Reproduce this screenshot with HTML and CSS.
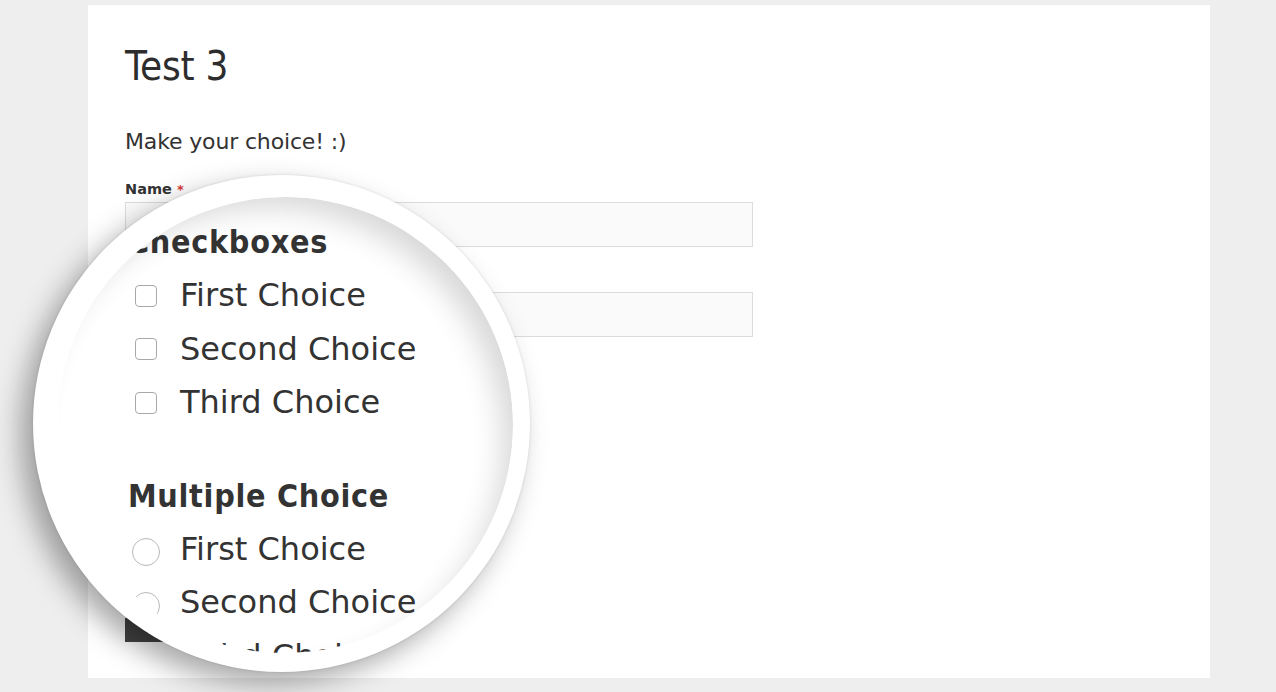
FILE: index.html
```html
<!DOCTYPE html>
<html lang="en">
<head>
<meta charset="utf-8">
<title>Test 3</title>
<link rel="stylesheet" href="styles.css">
</head>
<body>
<div class="page">
  <div class="card">
    <h1 class="title">Test 3</h1>
    <p class="intro">Make your choice! :)</p>
    <div class="field">
      <label class="label">Name <span class="req">*</span></label>
      <div class="input"></div>
    </div>
    <div class="field">
      <label class="label">Email <span class="req">*</span></label>
      <div class="input"></div>
    </div>
    <div class="hidden-fields">
      <div class="small-group">
        <div class="small-head">Checkboxes</div>
        <div class="small-opt">First Choice</div>
        <div class="small-opt">Second Choice</div>
        <div class="small-opt">Third Choice</div>
      </div>
      <div class="small-group">
        <div class="small-head">Multiple Choice</div>
        <div class="small-opt">First Choice</div>
        <div class="small-opt">Second Choice</div>
        <div class="small-opt">Third Choice</div>
      </div>
    </div>
    <div class="submit">Submit</div>
  </div>

  <div class="lens">
    <div class="lens-glass">
      <div class="mag">
        <div class="mag-head">Checkboxes</div>
        <div class="mag-opt"><span class="box"></span><span>First Choice</span></div>
        <div class="mag-opt"><span class="box"></span><span>Second Choice</span></div>
        <div class="mag-opt"><span class="box"></span><span>Third Choice</span></div>
        <div class="mag-head mag-head-2">Multiple Choice</div>
        <div class="mag-opt"><span class="radio"></span><span>First Choice</span></div>
        <div class="mag-opt"><span class="radio"></span><span>Second Choice</span></div>
        <div class="mag-opt"><span class="radio"></span><span>Third Choice</span></div>
      </div>
    </div>
  </div>
</div>
</body>
</html>
```
FILE: styles.css
```css
* { box-sizing: border-box; }
html, body { margin: 0; padding: 0; }
body {
  background: #eeeeee;
  font-family: "DejaVu Sans", Verdana, sans-serif;
  color: #333333;
  width: 1276px;
  height: 692px;
  overflow: hidden;
}
.page {
  position: relative;
  padding: 5px 0 0 88px;
}
.card {
  width: 1122px;
  height: 673px;
  background: #ffffff;
  padding: 37px 0 0 37px;
}
.title {
  margin: 0;
  font-family: "DejaVu Sans Condensed", "DejaVu Sans", sans-serif;
  font-weight: normal;
  font-size: 40px;
  line-height: 48px;
  letter-spacing: -0.2px;
  color: #2d2d2d;
}
.intro {
  margin: 37px 0 0;
  font-size: 22px;
  line-height: 30px;
  letter-spacing: -0.15px;
}
.field { margin-top: 22px; }
.label {
  display: block;
  font-weight: bold;
  font-size: 14.5px;
  line-height: 20px;
  margin-bottom: 2px;
  color: #333;
}
.req { color: #d63637; font-size: 13px; }
.input {
  width: 628px;
  height: 45px;
  border: 1px solid #dcdcdc;
  background: #fafafa;
}
.hidden-fields {
  height: 281px;
  padding-top: 24px;
  overflow: hidden;
}
.small-group { margin-bottom: 14px; }
.small-head { font-weight: bold; font-size: 14px; line-height: 20px; }
.small-opt { font-size: 14px; line-height: 24px; }
.submit {
  width: 92px;
  height: 24px;
  background: #444444;
  color: #fff;
  font-size: 13px;
  line-height: 24px;
  text-align: center;
}

/* magnifier */
.lens {
  position: absolute;
  left: 33px;
  top: 175px;
  width: 497px;
  height: 497px;
  border-radius: 50%;
  background: #ffffff;
  box-shadow: -12px 12px 28px rgba(0, 0, 0, 0.34), 0 0 3px rgba(0, 0, 0, 0.12);
}
.lens-glass {
  position: absolute;
  left: 24px;
  top: 22px;
  width: 456px;
  height: 456px;
  border-radius: 50%;
  overflow: hidden;
  background: #ffffff;
}
.lens-glass::after {
  content: "";
  position: absolute;
  inset: 0;
  border-radius: 50%;
  box-shadow: inset -18px 18px 30px -8px rgba(0, 0, 0, 0.16);
}
.mag {
  padding: 18px 0 0 71px;
  color: #333333;
}
.mag-head {
  font-family: "DejaVu Sans Condensed", "DejaVu Sans", sans-serif;
  font-weight: bold;
  font-size: 32px;
  line-height: 54px;
  letter-spacing: 0.7px;
  white-space: nowrap;
}
.mag-head-2 { margin-top: 39px; }
.mag-opt {
  display: flex;
  align-items: center;
  font-size: 32px;
  line-height: 53.5px;
  white-space: nowrap;
}
.box {
  flex: none;
  width: 22px;
  height: 22px;
  margin: 0 23px 0 7px;
  border: 1.5px solid #a8a8a8;
  border-radius: 4px;
  background: #fff;
}
.radio {
  flex: none;
  width: 28px;
  height: 28px;
  margin: 6px 20px 0 4px;
  border: 1.5px solid #b8b8b8;
  border-radius: 50%;
  background: #fff;
}
```
